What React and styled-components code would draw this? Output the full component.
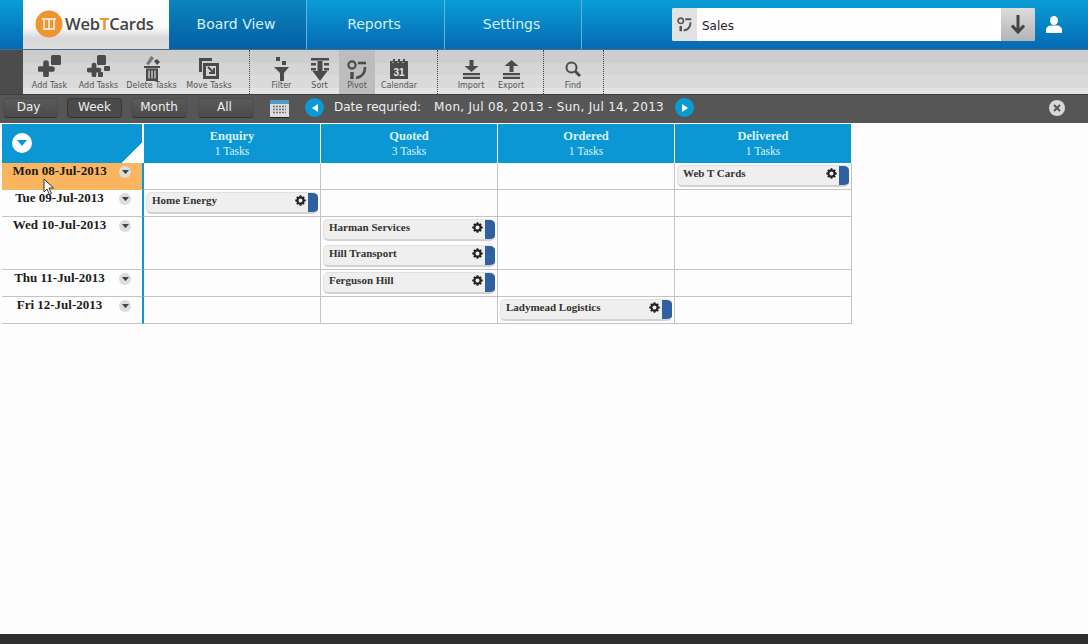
import React from "react";
import styled, { createGlobalStyle } from "styled-components";

const GlobalStyle = createGlobalStyle`
  html, body {
    margin: 0;
    padding: 0;
    background: #fefdfd;
  }
  * {
    box-sizing: border-box;
  }
`;

const Page = styled.div`
  position: relative;
  height: 100vh;
  display: flex;
  flex-direction: column;
  font-family: "DejaVu Sans", sans-serif;
  overflow: hidden;
`;

const NavBar = styled.div`
  height: 50px;
  padding-left: 23px;
  display: flex;
  background: linear-gradient(#0a9dd6, #0569b4);
  border-bottom: 1px solid #4a6d85;
`;

const Logo = styled.div`
  width: 146px;
  display: flex;
  align-items: center;
  gap: 2px;
  padding: 0 0 2px 12px;
  background: linear-gradient(#ffffff 0, #fbfbfb 55%, #d9d9d9 78%, #dedede 100%);
`;

const LogoText = styled.span`
  font-family: "Open Sans", sans-serif;
  font-size: 16.5px;
  font-weight: 600;
  letter-spacing: -0.2px;
  color: #444;

  b {
    color: #ef9433;
    font-weight: 700;
  }
`;

const NavTab = styled.div`
  width: ${(p) => p.$w || 138}px;
  display: flex;
  align-items: center;
  justify-content: center;
  padding: 0 3px 2px 0;
  font-size: 14px;
  color: #d3f0fb;
  border-right: 1px solid #5fb2de;
  background: ${(p) => (p.$active ? "linear-gradient(#0a84bd, #055fa4)" : "none")};
`;

const Picker = styled.div`
  width: 363px;
  height: 33px;
  margin: 8px 0 0 90px;
  display: flex;
  background: #fffdfd;
  border-radius: 2px;
  overflow: hidden;
`;

const PickerIcon = styled.div`
  width: 25px;
  display: flex;
  align-items: center;
  justify-content: center;
  background: #e2e2e2;
`;

const PickerText = styled.div`
  flex: 1;
  display: flex;
  align-items: center;
  padding: 2px 0 0 5px;
  font-size: 12px;
  color: #222;
`;

const PickerArrow = styled.div`
  width: 34px;
  display: flex;
  align-items: center;
  justify-content: center;
  background: linear-gradient(#dcdcdc, #b4b4b4);
`;

const UserButton = styled.div`
  width: 38px;
  display: flex;
  align-items: center;
  justify-content: center;
  padding-bottom: 1px;
`;

const ToolBar = styled.div`
  height: 44px;
  padding-left: 23px;
  background: #4c4c4c;
`;

const ToolStrip = styled.div`
  height: 44px;
  display: flex;
  padding-left: 2px;
  background: linear-gradient(
    #cccccc 0,
    #cecece 13px,
    #d5d5d5 13px,
    #d5d5d5 25px,
    #dadada 25px,
    #dadada 38px,
    #e3e3e3 38px
  );
`;

const ToolGroup = styled.div`
  display: flex;
  padding: 0 ${(p) => p.$end || 12}px 0 ${(p) => p.$start ?? 12}px;
  border-right: 1px dotted #444;
`;

const Tool = styled.div`
  width: ${(p) => p.$w}px;
  display: flex;
  flex-direction: column;
  align-items: center;
  justify-content: flex-end;
  padding-bottom: 3px;
  font-size: 8px;
  line-height: 10px;
  color: #555;
  white-space: nowrap;
  background: ${(p) => (p.$active ? "#bdbdbd" : "none")};
`;

const ToolIcon = styled.span`
  display: block;
  margin-bottom: ${(p) => p.$lift ?? 0}px;

  svg {
    display: block;
  }
`;

const DateBar = styled.div`
  height: 29px;
  padding: 3px 23px 0 3px;
  display: flex;
  align-items: flex-start;
  background: #565656;
  border-top: 1px solid #3f3f3f;
  font-size: 12px;
  color: #eeeeee;
`;

const RangeButton = styled.div`
  width: ${(p) => p.$w}px;
  height: 20px;
  margin-right: ${(p) => p.$gap}px;
  padding: 0 ${(p) => p.$nudge || 0}px 2px 0;
  display: flex;
  align-items: center;
  justify-content: center;
  border-radius: 4px;
  background: ${(p) => (p.$active ? "#4a4a4a" : "linear-gradient(#5a5a5a, #4b4b4b)")};
  border: 1px solid ${(p) => (p.$active ? "#383838" : "#4d4d4d")};
  border-bottom-color: #333;
`;

const CalendarButton = styled.div`
  margin: 2px 16px 0 16px;
`;

const RoundNav = styled.div`
  width: 19px;
  height: 19px;
  border-radius: 50%;
  background: #0a9bd6;
  display: flex;
  align-items: center;
  justify-content: center;
  color: #fff;
`;

const DateLabel = styled.div`
  margin: 2px 13px 0 10px;
  white-space: nowrap;
`;

const DateRange = styled.div`
  margin: 2px 11px 0 0;
  letter-spacing: 0.3px;
  white-space: nowrap;
`;

const CloseButton = styled.div`
  margin: 2px 0 0 auto;
  width: 16px;
  height: 16px;
  border-radius: 50%;
  background: #d8d8d8;
  display: flex;
  align-items: center;
  justify-content: center;
`;

const Board = styled.div`
  margin: 1px 0 0 2px;
  font-family: "Liberation Serif", serif;
  font-weight: 700;
`;

const BoardRow = styled.div`
  display: grid;
  grid-template-columns: 142px repeat(4, 177px);
  min-height: ${(p) => p.$h}px;
`;

const Corner = styled.div`
  padding: 9px 0 0 10px;
  border-right: 2px solid #fff;
  background-color: #0b97d3;
  background-image: linear-gradient(135deg, transparent 50%, #fff 50%);
  background-size: 20px 20px;
  background-position: right bottom;
  background-repeat: no-repeat;
`;

const CornerToggle = styled.div`
  width: 20px;
  height: 20px;
  border-radius: 50%;
  background: #fff;
  display: flex;
  align-items: center;
  justify-content: center;
`;

const ColumnHead = styled.div`
  padding-top: 4px;
  border-right: 1px solid #fff;
  background: #0b97d3;
  text-align: center;
  color: #d9f3fb;
  font-size: 12.5px;
  line-height: 16px;

  small {
    display: block;
    font-size: 11.5px;
    font-weight: 400;
    line-height: 15px;
  }
`;

const DayCell = styled.div`
  display: flex;
  border-right: 2px solid #0b97d3;
  border-bottom: 1px solid ${(p) => (p.$today ? "#f9b55f" : "#c4c4c4")};
  background: ${(p) => (p.$today ? "#f9b55f" : "#fefdfd")};
  color: #1c1c1c;
  font-size: 13px;
  line-height: 15px;
`;

const DayName = styled.div`
  width: 115px;
  text-align: center;
  white-space: nowrap;
`;

const DayToggle = styled.div`
  width: 12px;
  height: 12px;
  margin: 3px 0 0 2px;
  border-radius: 50%;
  background: #dcdcdc;
  display: flex;
  align-items: center;
  justify-content: center;
`;

const Cell = styled.div`
  padding: 2px 2px 0 2px;
  display: flex;
  flex-direction: column;
  gap: 4px;
  border-right: 1px solid #c4c4c4;
  border-bottom: 1px solid #c4c4c4;
`;

const Card = styled.div`
  height: 22px;
  display: flex;
  align-items: flex-start;
  padding: 1px 0 0 5px;
  background: #efefef;
  border-radius: 5px;
  border: 1px solid #e2e2e2;
  border-bottom: 2px solid #d2d2d2;
  border-right: 0;
  overflow: hidden;
  color: #333;
  font-size: 11px;
  line-height: 13px;
`;

const CardName = styled.span`
  flex: 1;
  white-space: nowrap;
`;

const CardTab = styled.span`
  width: 10px;
  height: 22px;
  margin: -2px 0 0 2px;
  background: #2f609f;
  border-radius: 0 4px 4px 0;
`;

const Gear = styled.svg`
  display: block;
  flex-shrink: 0;
  margin-top: 1px;
`;

const Footer = styled.div`
  height: 10px;
  margin-top: auto;
  background: #2f2f2f;
`;

const Pointer = styled.svg`
  position: absolute;
  left: 43px;
  top: 178px;
`;

const ink = "#4b4b4b";

const GearIcon = () => (
  <Gear width="11" height="11" viewBox="0 0 12 12">
    <circle cx="6" cy="6" r="3.4" fill="none" stroke="#222" strokeWidth="2.4" />
    <path
      d="M6 .3V2.5M6 9.5v2.2M.3 6H2.5M9.5 6h2.2M2 2l1.5 1.5M8.5 8.5 10 10M2 10l1.5-1.5M8.5 3.5 10 2"
      stroke="#222"
      strokeWidth="2"
    />
  </Gear>
);

const Plus = ({ x, y, s }) => (
  <path
    d={`M${x - s} ${y}H${x + s}M${x} ${y - s}V${y + s}`}
    stroke={ink}
    strokeWidth={s * 0.95}
    strokeLinecap="round"
  />
);

const AddTaskIcon = () => (
  <svg width="24" height="22" viewBox="0 0 24 22">
    <Plus x={8} y={14} s={6} />
    <rect x="13" y="0" width="10" height="10" rx="1.5" fill={ink} />
  </svg>
);

const AddTasksIcon = () => (
  <svg width="24" height="22" viewBox="0 0 24 22">
    <Plus x={7} y={15} s={5} />
    <rect x="10" y="0" width="9" height="10" rx="1.5" fill={ink} />
    <rect x="17" y="11" width="6" height="5" rx="1" fill={ink} />
    <rect x="11" y="17" width="5" height="5" rx="1" fill={ink} />
  </svg>
);

const DeleteIcon = () => (
  <svg width="18" height="26" viewBox="0 0 18 26">
    <path d="M3 9 8 1l3 2-5 7z" fill="#777" />
    <path d="m11 6 3-2 3 3-3 3z" fill={ink} />
    <path d="M1 11h16v2H1z" fill={ink} />
    <path d="M3 13.5h12V26H3z" fill={ink} />
    <path d="M6 15.5v8M9 15.5v8M12 15.5v8" stroke="#ddd" strokeWidth="1.2" />
  </svg>
);

const MoveIcon = () => (
  <svg width="22" height="23" viewBox="0 0 22 23">
    <path d="M1 1h13v3H4v11H1z" fill={ink} />
    <path d="M5 6h16v16H5z" fill={ink} />
    <path d="M8 9h10v10H8z" fill="#d5d5d5" />
    <path d="m10 10 6 6M16 11v5h-5" fill="none" stroke={ink} strokeWidth="2" />
  </svg>
);

const FilterIcon = () => (
  <svg width="15" height="24" viewBox="0 0 15 24">
    <rect x="2" y="0" width="4" height="4" fill={ink} />
    <rect x="8" y="4" width="4" height="4" fill={ink} />
    <path d="M0 10h15l-5 6v8H6v-8z" fill={ink} />
  </svg>
);

const SortIcon = () => (
  <svg width="18" height="23" viewBox="0 0 18 23">
    <path d="M0 0h18v2.5H0zM0 5h5v2.5H0zM13 5h5v2.5h-5zM0 10h5v2.5H0zM13 10h5v2.5h-5z" fill={ink} />
    <path d="M6.500 3h5v10h5L9 23 1.500 13h5z" fill={ink} />
  </svg>
);

const PivotGlyph = ({ size = 20, color = ink }) => (
  <svg width={size} height={size} viewBox="0 0 20 20" fill="none">
    <circle cx="5" cy="5" r="3.6" stroke={color} strokeWidth="2.2" />
    <path d="M11 3h8" stroke={color} strokeWidth="2.6" />
    <path d="M5 12v7" stroke={color} strokeWidth="3.4" />
    <path d="M18 7c0 6-3 10-9 11" stroke={color} strokeWidth="2.6" />
  </svg>
);

const CalendarIcon = () => (
  <svg width="18" height="20" viewBox="0 0 18 20">
    <path d="M0 2h18v18H0z" fill={ink} />
    <path d="M4 0v4M9 0v4M14 0v4" stroke={ink} strokeWidth="2" />
    <path d="M3 3v1M8 3v1M13 3v1" stroke="#ddd" />
    <text x="9" y="17" textAnchor="middle" fontSize="10" fontWeight="700" fontFamily="Liberation Sans, sans-serif" fill="#e4e4e4">31</text>
  </svg>
);

const ImportIcon = () => (
  <svg width="17" height="19" viewBox="0 0 17 19">
    <path d="M6.500 0h4v6h5l-7 6-7-6h5z" fill={ink} />
    <path d="M0 13h17v2.300H0zM0 16.700h17V19H0z" fill={ink} />
  </svg>
);

const ExportIcon = () => (
  <svg width="17" height="19" viewBox="0 0 17 19">
    <path d="M6.500 12h4V6h5l-7-6-7 6h5z" fill={ink} />
    <path d="M0 13h17v2.300H0zM0 16.700h17V19H0z" fill={ink} />
  </svg>
);

const FindIcon = () => (
  <svg width="16" height="16" viewBox="0 0 16 16" fill="none">
    <circle cx="6.500" cy="6.500" r="5" stroke={ink} strokeWidth="2" />
    <path d="m10.500 10.500 4.500 4.500" stroke={ink} strokeWidth="3" />
  </svg>
);

const Caret = ({ w = 8, color = "#444" }) => (
  <svg width={w} height={w * 0.6} viewBox="0 0 10 6">
    <path d="M0 0h10L5 6z" fill={color} />
  </svg>
);

const DAYS = [
  { name: "Mon 08-Jul-2013", h: 27, today: true, cards: { 3: ["Web T Cards"] } },
  { name: "Tue 09-Jul-2013", h: 27, cards: { 0: ["Home Energy"] } },
  { name: "Wed 10-Jul-2013", h: 53, cards: { 1: ["Harman Services", "Hill Transport"] } },
  { name: "Thu 11-Jul-2013", h: 27, cards: { 1: ["Ferguson Hill"] } },
  { name: "Fri 12-Jul-2013", h: 27, cards: { 2: ["Ladymead Logistics"] } },
];

const COLUMNS = [
  ["Enquiry", 1],
  ["Quoted", 3],
  ["Ordered", 1],
  ["Delivered", 1],
];

const App = () => {
  return (
    <Page>
      <GlobalStyle />
      <NavBar>
        <Logo>
          <svg width="28" height="28" viewBox="0 0 28 28">
            <circle cx="14" cy="14" r="13.500" fill="#ef9433" />
            <path d="M7 9h14M9 9v10h10V9M14 9v10" fill="none" stroke="#fde6c8" strokeWidth="1.800" />
          </svg>
          <LogoText>
            Web<b>T</b>Cards
          </LogoText>
        </Logo>
        <NavTab $active>Board View</NavTab>
        <NavTab>Reports</NavTab>
        <NavTab $w={137}>Settings</NavTab>
        <Picker>
          <PickerIcon>
            <PivotGlyph size={15} color="#555" />
          </PickerIcon>
          <PickerText>Sales</PickerText>
          <PickerArrow>
            <svg width="14" height="19" viewBox="0 0 14 19" fill="none">
              <path d="M7 0v17M1 10.500 7 17l6-6.500" stroke="#444" strokeWidth="3" />
            </svg>
          </PickerArrow>
        </Picker>
        <UserButton>
          <svg width="16" height="17" viewBox="0 0 16 17" fill="#fff">
            <ellipse cx="8" cy="4.500" rx="4" ry="4.500" />
            <path d="M0 17v-3c0-3 3-4.500 4-4.500h8c1 0 4 1.500 4 4.500v3z" />
          </svg>
        </UserButton>
      </NavBar>

      <ToolBar>
        <ToolStrip>
          <ToolGroup $start={0} $end={11}>
            <Tool $w={49}><ToolIcon $lift={4}><AddTaskIcon /></ToolIcon>Add Task</Tool>
            <Tool $w={49}><ToolIcon $lift={4}><AddTasksIcon /></ToolIcon>Add Tasks</Tool>
            <Tool $w={57}><ToolIcon><DeleteIcon /></ToolIcon>Delete Tasks</Tool>
            <Tool $w={58}><ToolIcon $lift={1}><MoveIcon /></ToolIcon>Move Tasks</Tool>
          </ToolGroup>
          <ToolGroup $start={13} $end={14}>
            <Tool $w={37}><ToolIcon><FilterIcon /></ToolIcon>Filter</Tool>
            <Tool $w={39}><ToolIcon><SortIcon /></ToolIcon>Sort</Tool>
            <Tool $w={36} $active><ToolIcon $lift={1}><PivotGlyph /></ToolIcon>Pivot</Tool>
            <Tool $w={48}><ToolIcon $lift={2}><CalendarIcon /></ToolIcon>Calendar</Tool>
          </ToolGroup>
          <ToolGroup $start={13} $end={12}>
            <Tool $w={40}><ToolIcon $lift={2}><ImportIcon /></ToolIcon>Import</Tool>
            <Tool $w={40}><ToolIcon $lift={2}><ExportIcon /></ToolIcon>Export</Tool>
          </ToolGroup>
          <ToolGroup $start={11} $end={12}>
            <Tool $w={36}><ToolIcon $lift={4}><FindIcon /></ToolIcon>Find</Tool>
          </ToolGroup>
        </ToolStrip>
      </ToolBar>

      <DateBar>
        <RangeButton $w={55} $gap={9} $nudge={4}>Day</RangeButton>
        <RangeButton $w={55} $gap={9} $active>Week</RangeButton>
        <RangeButton $w={56} $gap={11}>Month</RangeButton>
        <RangeButton $w={56} $gap={0} $nudge={3}>All</RangeButton>
        <CalendarButton>
          <svg width="19" height="18" viewBox="0 0 19 18">
            <path d="M0 0h19v17H0z" fill="#dcdcdc" />
            <path d="M0 0h19v4H0z" fill="#4f9bc4" />
            <path d="M3 6.500h13M3 9.500h13M3 12.500h13" stroke="#6a7378" strokeWidth="1.500" strokeDasharray="2 1" />
            <path d="M0 17h19v1H0z" fill="#222" />
          </svg>
        </CalendarButton>
        <RoundNav>
          <svg width="6" height="8" viewBox="0 0 6 8"><path d="M6 0v8L0 4z" fill="#fff" /></svg>
        </RoundNav>
        <DateLabel>Date requried:</DateLabel>
        <DateRange>Mon, Jul 08, 2013 - Sun, Jul 14, 2013</DateRange>
        <RoundNav>
          <svg width="6" height="8" viewBox="0 0 6 8"><path d="M0 0v8l6-4z" fill="#fff" /></svg>
        </RoundNav>
        <CloseButton>
          <svg width="8" height="8" viewBox="0 0 8 8">
            <path d="m1 1 6 6M7 1 1 7" stroke="#555" strokeWidth="2" />
          </svg>
        </CloseButton>
      </DateBar>

      <Board>
        <BoardRow $h={39}>
          <Corner>
            <CornerToggle><Caret w={10} color="#0b97d3" /></CornerToggle>
          </Corner>
          {COLUMNS.map(([title, count]) => (
            <ColumnHead key={title}>
              {title}
              <small>{count} Tasks</small>
            </ColumnHead>
          ))}
        </BoardRow>
        {DAYS.map((day) => (
          <BoardRow key={day.name} $h={day.h}>
            <DayCell $today={day.today}>
              <DayName>{day.name}</DayName>
              <DayToggle><Caret w={7} /></DayToggle>
            </DayCell>
            {COLUMNS.map((col, i) => (
              <Cell key={col[0]}>
                {(day.cards[i] || []).map((name) => (
                  <Card key={name}>
                    <CardName>{name}</CardName>
                    <GearIcon />
                    <CardTab />
                  </Card>
                ))}
              </Cell>
            ))}
          </BoardRow>
        ))}
      </Board>

      <Footer />

      <Pointer width="12" height="18" viewBox="0 0 12 18">
        <path d="M1 1v13l3-3 2.500 5.500 2-1L6 10h4.500z" fill="#fff" stroke="#333" strokeWidth="1" />
      </Pointer>
    </Page>
  );
};

export default App;
